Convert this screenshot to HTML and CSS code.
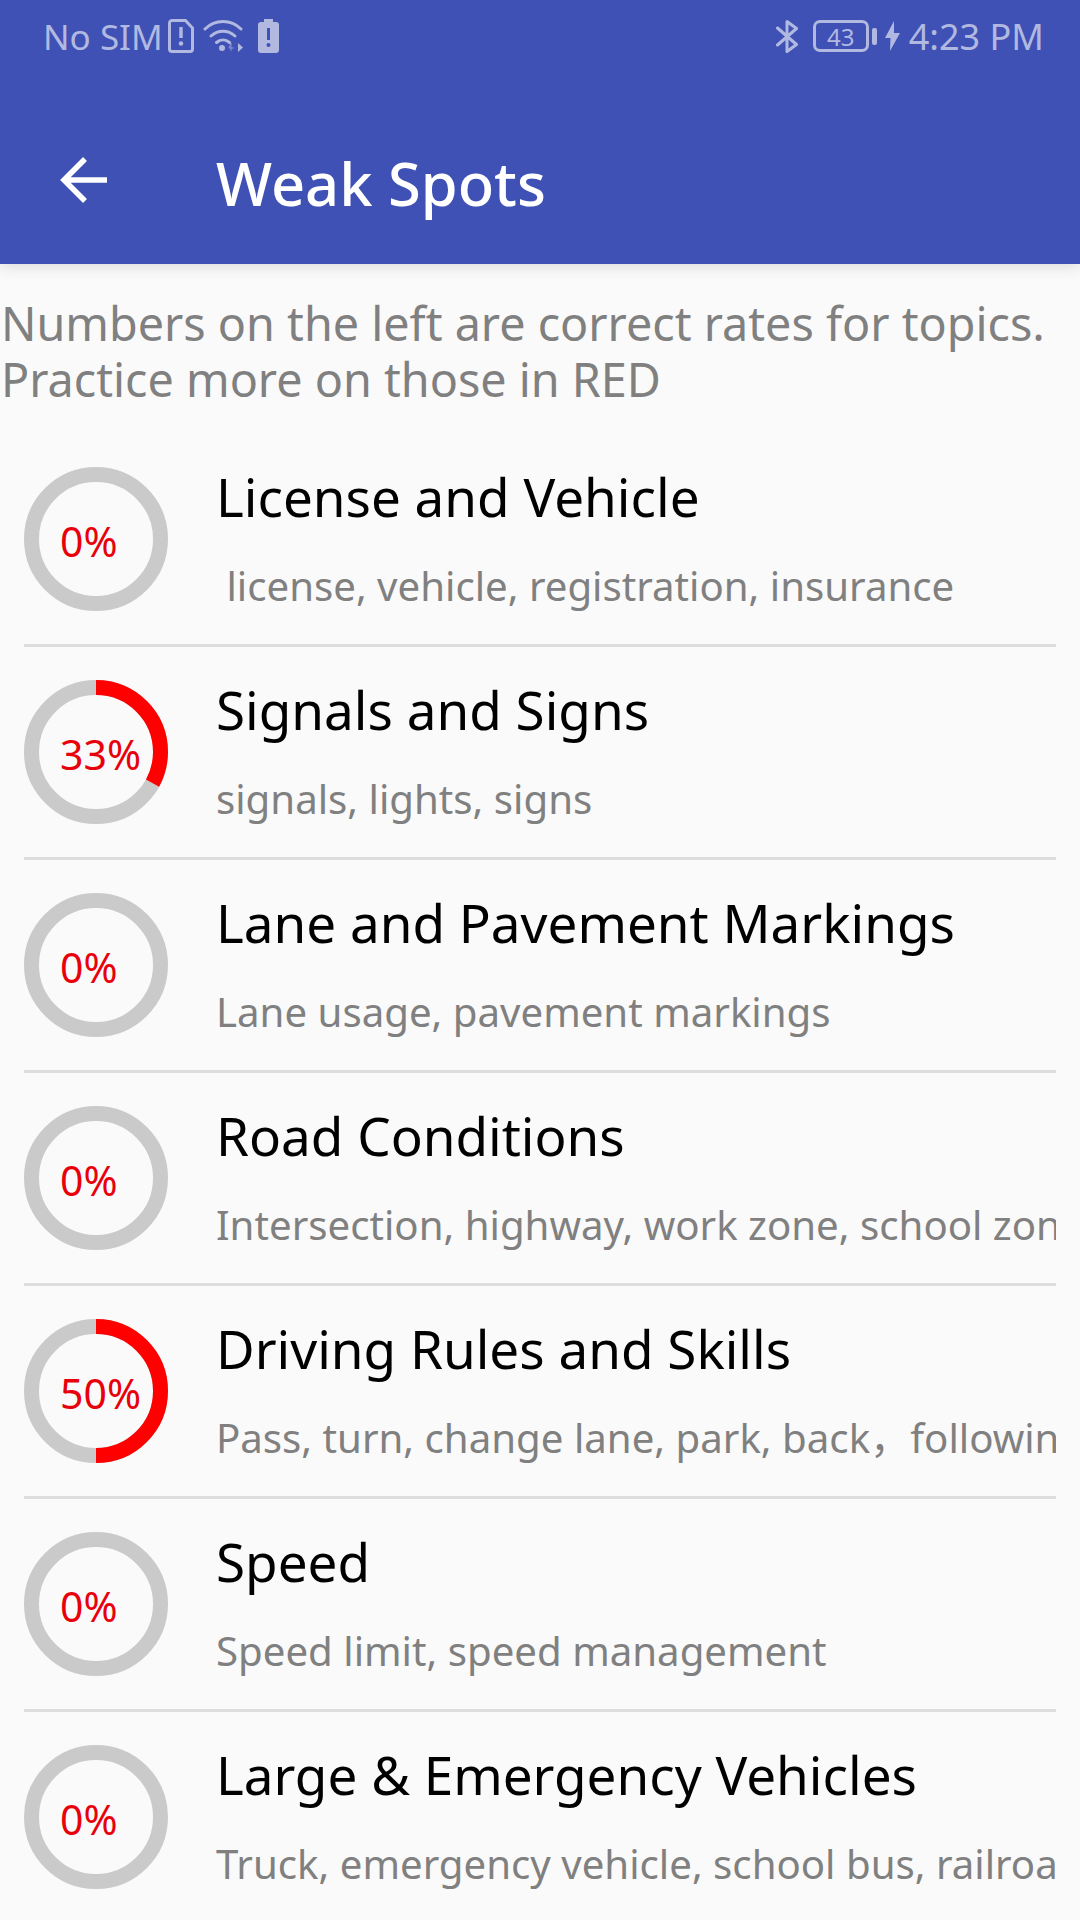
FILE: index.html
```html
<!DOCTYPE html>
<html lang="en">
<head>
    <meta charset="UTF-8">
    <meta name="viewport" content="width=device-width, initial-scale=1.0">
    <title>Weak Spots</title>
    <link rel="stylesheet" href="styles.css">
</head>
<body>
    <header>
        <div class="status-bar">
            <div class="status-left">
                <span>No SIM</span>
                <svg class="icon-sim" viewBox="0 0 26 34"><path d="M4 1.500h13.500L24.500 9v21a2.500 2.500 0 0 1-2.500 2.500H4A2.500 2.500 0 0 1 1.500 30V4A2.500 2.500 0 0 1 4 1.500z" fill="none" stroke="currentColor" stroke-width="3"/><path d="M13 8v11" stroke="currentColor" stroke-width="3.400"/><circle cx="13" cy="24.500" r="2.200" fill="currentColor"/></svg>
                <svg class="icon-wifi" viewBox="0 0 40 34"><g fill="none" stroke="currentColor" stroke-width="3" stroke-linecap="round"><path d="M2 10C12 0 28 0 38 10"/><path d="M8 17c7-6.500 17-6.500 24 0"/><path d="M13.500 23.500c4-3.500 9-3.500 13 0"/></g><circle cx="19" cy="29" r="3" fill="currentColor"/><path d="M35 24l5 4.500-5 4.500z" fill="currentColor"/><path d="M28 32v-8l-2 5h5" fill="none" stroke="currentColor" stroke-width="1" opacity=".6"/></svg>
                <svg class="icon-battery-alert" viewBox="0 0 21 34"><path d="M6 0h9v3h3a3 3 0 0 1 3 3v25a3 3 0 0 1-3 3H3a3 3 0 0 1-3-3V6a3 3 0 0 1 3-3h3z" fill="currentColor"/><path d="M10.500 9v12" stroke="#3f51b5" stroke-width="3"/><circle cx="10.500" cy="26" r="2" fill="#3f51b5"/></svg>
            </div>
            <div class="status-right">
                <svg class="icon-bt" viewBox="0 0 23 33"><path d="M1.500 8l19 16.500L11 31.500V1.500l9.500 7L1.500 25" fill="none" stroke="currentColor" stroke-width="3" stroke-linejoin="round" stroke-linecap="round"/></svg>
                <div class="battery"><span class="battery-level">43</span></div>
                <div class="battery-nib"></div>
                <svg class="icon-bolt" viewBox="0 0 15 30"><path d="M9 0L0 17h5.500L5 30l10-18H9z" fill="currentColor"/></svg>
                <span class="clock">4:23 PM</span>
            </div>
        </div>
        <div class="toolbar">
            <svg class="back" viewBox="0 0 48 48"><path d="M47 24H4M25 3L4 24l21 21" fill="none" stroke="#fff" stroke-width="5.500"/></svg>
            <h1>Weak Spots</h1>
        </div>
    </header>

    <p class="intro">Numbers on the left are correct rates for topics.<br>Practice more on those in RED</p>

    <ul class="topics">
        <li class="topic">
            <div class="ring">
                <svg viewBox="0 0 144 144"><circle class="track" cx="72" cy="72" r="64.500"/><circle class="value" cx="72" cy="72" r="64.500" pathLength="100" stroke-dasharray="0 100"/></svg>
                <span class="rate">0%</span>
            </div>
            <div class="topic-text">
                <div class="topic-name">License and Vehicle</div>
                <div class="topic-sub"> license, vehicle, registration, insurance</div>
            </div>
        </li>
        <li class="topic">
            <div class="ring">
                <svg viewBox="0 0 144 144"><circle class="track" cx="72" cy="72" r="64.500"/><circle class="value" cx="72" cy="72" r="64.500" pathLength="100" stroke-dasharray="33 100"/></svg>
                <span class="rate">33%</span>
            </div>
            <div class="topic-text">
                <div class="topic-name">Signals and Signs</div>
                <div class="topic-sub">signals, lights, signs</div>
            </div>
        </li>
        <li class="topic">
            <div class="ring">
                <svg viewBox="0 0 144 144"><circle class="track" cx="72" cy="72" r="64.500"/><circle class="value" cx="72" cy="72" r="64.500" pathLength="100" stroke-dasharray="0 100"/></svg>
                <span class="rate">0%</span>
            </div>
            <div class="topic-text">
                <div class="topic-name">Lane and Pavement Markings</div>
                <div class="topic-sub">Lane usage, pavement markings</div>
            </div>
        </li>
        <li class="topic">
            <div class="ring">
                <svg viewBox="0 0 144 144"><circle class="track" cx="72" cy="72" r="64.500"/><circle class="value" cx="72" cy="72" r="64.500" pathLength="100" stroke-dasharray="0 100"/></svg>
                <span class="rate">0%</span>
            </div>
            <div class="topic-text">
                <div class="topic-name">Road Conditions</div>
                <div class="topic-sub">Intersection, highway, work zone, school zone</div>
            </div>
        </li>
        <li class="topic">
            <div class="ring">
                <svg viewBox="0 0 144 144"><circle class="track" cx="72" cy="72" r="64.500"/><circle class="value" cx="72" cy="72" r="64.500" pathLength="100" stroke-dasharray="50 100"/></svg>
                <span class="rate">50%</span>
            </div>
            <div class="topic-text">
                <div class="topic-name">Driving Rules and Skills</div>
                <div class="topic-sub">Pass, turn, change lane, park, back，following</div>
            </div>
        </li>
        <li class="topic">
            <div class="ring">
                <svg viewBox="0 0 144 144"><circle class="track" cx="72" cy="72" r="64.500"/><circle class="value" cx="72" cy="72" r="64.500" pathLength="100" stroke-dasharray="0 100"/></svg>
                <span class="rate">0%</span>
            </div>
            <div class="topic-text">
                <div class="topic-name">Speed</div>
                <div class="topic-sub">Speed limit, speed management</div>
            </div>
        </li>
        <li class="topic">
            <div class="ring">
                <svg viewBox="0 0 144 144"><circle class="track" cx="72" cy="72" r="64.500"/><circle class="value" cx="72" cy="72" r="64.500" pathLength="100" stroke-dasharray="0 100"/></svg>
                <span class="rate">0%</span>
            </div>
            <div class="topic-text">
                <div class="topic-name">Large &amp; Emergency Vehicles</div>
                <div class="topic-sub">Truck, emergency vehicle, school bus, railroad</div>
            </div>
        </li>
    </ul>
</body>
</html>
```

FILE: styles.css
```css
body {
    font-family: 'Noto Sans', 'Noto Sans CJK SC', sans-serif;
    margin: 0;
    background: #fafafa;
    color: #000;
    height: 1920px;
    overflow: hidden;
}

/* Header */
header {
    background: #3f51b5;
    height: 264px;
    box-shadow: 0 3px 14px rgba(0, 0, 0, 0.12);
    display: flex;
    flex-direction: column;
}
.status-bar {
    height: 72px;
    padding: 0 36px 0 43px;
    display: flex;
    justify-content: space-between;
    align-items: center;
    color: #b2b9e1;
    font-size: 35px;
}
.status-left, .status-right {
    display: flex;
    align-items: center;
}
.icon-sim { width: 26px; height: 34px; margin-left: 5px; }
.icon-wifi { width: 40px; height: 34px; margin-left: 9px; }
.icon-battery-alert { width: 21px; height: 34px; margin-left: 15px; }
.icon-bt { width: 23px; height: 33px; }
.battery {
    width: 56px;
    height: 32px;
    box-sizing: border-box;
    margin-left: 14px;
    border: 3px solid #b2b9e1;
    border-radius: 7px;
    display: flex;
    justify-content: center;
    align-items: center;
}
.battery-level { font-size: 24px; }
.battery-nib {
    width: 5px;
    height: 17px;
    margin-left: 3px;
    background: #b2b9e1;
    border-radius: 2px;
}
.icon-bolt { width: 15px; height: 30px; margin-left: 8px; }
.clock { margin-left: 9px; font-size: 36px; }

.toolbar {
    flex: 1;
    display: flex;
    align-items: center;
    padding: 24px 0 0 60px;
}
.back { width: 48px; height: 48px; }
h1 {
    margin: 4px 0 0 108px;
    color: #fff;
    font-size: 59.600px;
    font-weight: 500;
}

/* Intro */
.intro {
    margin: 0;
    padding: 31px 0 27px 1px;
    font-size: 46.700px;
    line-height: 56px;
    color: #808080;
    white-space: nowrap;
}

/* Topics */
.topics {
    list-style: none;
    margin: 0;
    padding: 0 24px;
}
.topic {
    height: 210px;
    border-bottom: 3px solid #ddd;
    display: flex;
}
.topic:last-child { border-bottom: none; }
.ring {
    position: relative;
    width: 144px;
    height: 144px;
    margin-top: 33px;
    flex: none;
}
.ring svg {
    display: block;
    width: 144px;
    height: 144px;
    transform: rotate(-90deg);
}
.track, .value {
    fill: none;
    stroke-width: 15;
}
.track { stroke: #cacaca; }
.value { stroke: #ff0000; }
.rate {
    position: absolute;
    left: 36px;
    top: 46px;
    font-size: 41px;
    line-height: 56px;
    color: #e8000b;
}
.topic-text {
    margin-left: 48px;
    min-width: 0;
    flex: 1;
    padding-top: 28px;
}
.topic-name {
    font-size: 53px;
    line-height: 70px;
    white-space: nowrap;
}
.topic-sub {
    margin-top: 26px;
    font-size: 40.200px;
    line-height: 56px;
    color: #808080;
    white-space: pre;
    overflow: hidden;
}
```
